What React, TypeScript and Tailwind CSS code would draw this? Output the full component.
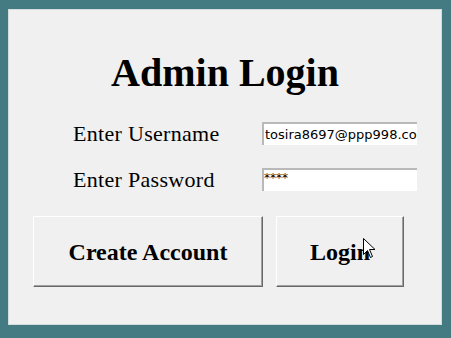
import React from "react";

export default function App() {
  return (
    <div className="w-[451px] h-[338px] bg-[#447b83] pt-[9px] pl-[8px] overflow-hidden">
      <div className="relative w-[434px] h-[316px] bg-[#f0f0f0] border border-[#d4dcdc] box-border font-['Liberation_Serif','Times_New_Roman',serif] text-black">
        <div className="pt-[43px] text-center text-[40px] leading-[40px] font-bold">
          Admin Login
        </div>
        <div className="mt-[29px] pl-[64px] grid grid-cols-[189px_155px] gap-y-[23px]">
          <div className="text-[22px] leading-[23px] tracking-[0.3px]">Enter Username</div>
          <div className="h-[23px] bg-white border-t-2 border-l-2 border-[#b9b9b9] overflow-hidden whitespace-nowrap pl-[1px] text-[13px] leading-[21px] font-['DejaVu_Sans',Tahoma,sans-serif]">
            tosira8697@ppp998.com
          </div>
          <div className="text-[22px] leading-[23px] tracking-[0.3px]">Enter Password</div>
          <div className="h-[23px] bg-white border-t-2 border-l-2 border-[#b9b9b9] overflow-hidden whitespace-nowrap pt-[2px] text-[12px] leading-[12px] font-['DejaVu_Sans',Tahoma,sans-serif]">
            ****
          </div>
        </div>
        <div className="mt-[25px] pl-[24px] flex gap-[13px]">
          <div className="w-[230px] h-[71px] flex items-center justify-center border border-t-white border-l-white border-r-[#696969] border-b-[#696969] shadow-[inset_-1px_-1px_0_#a0a0a0] text-[24px] font-bold">
            Create Account
          </div>
          <div className="w-[128px] h-[71px] flex items-center justify-center border border-t-white border-l-white border-r-[#696969] border-b-[#696969] shadow-[inset_-1px_-1px_0_#a0a0a0] text-[24px] font-bold">
            Login
          </div>
        </div>
        <svg className="absolute left-[354px] top-[228px]" width="13" height="21" viewBox="0 0 13 21">
          <path d="M0.5 0.5 L0.5 16.5 L4.5 12.5 L7.5 19.5 L9.5 18.5 L6.5 11.5 L12 11.5 Z" fill="white" stroke="black" strokeWidth="1" strokeLinejoin="miter" />
        </svg>
      </div>
    </div>
  );
}
